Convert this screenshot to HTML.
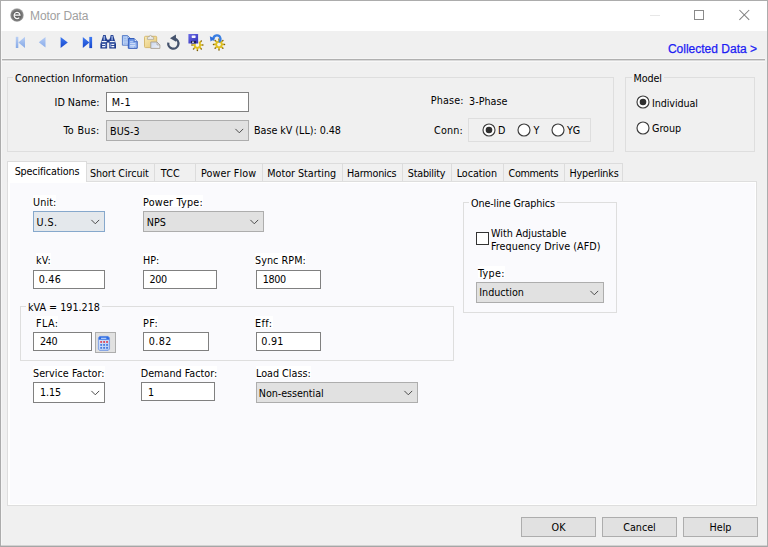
<!DOCTYPE html>
<html lang="en"><head><meta charset="utf-8"><title>Motor Data</title>
<style>
html,body{margin:0;padding:0}
body{width:768px;height:547px;overflow:hidden;background:#f0f0f0;position:relative;font-family:"DejaVu Sans Condensed", "Liberation Sans", sans-serif;font-size:10.7px;line-height:13px;color:#000}
div{box-sizing:border-box;position:absolute}
.t{white-space:nowrap;line-height:13px;height:13px}
.win{left:0;top:0;width:768px;height:547px;border:1px solid #acacac;border-bottom:1px solid #a6a6a6}
.winb{left:1px;top:545px;width:766px;height:1px;background:#d2d2d2}
.winl{left:1px;top:31px;width:1px;height:514px;background:#f6f6f6}
.title{left:1px;top:1px;width:766px;height:30px;background:#fff}
.ttl{font-family:"Liberation Sans",sans-serif;font-size:12px;color:#a0a0a0}
.cd{font-family:"Liberation Sans",sans-serif;font-size:12px;color:#1c1cf4;-webkit-text-stroke:0.25px #1c1cf4}
.sep{left:1px;top:58px;width:764px;height:4px;background:linear-gradient(#f5f5f5 0 25%,#b0b0b0 25% 50%,#d9d9d9 50% 75%,#f7f7f7 75% 100%)}
.sep2{display:none}
.grp{border:1px solid #dedede}
.gl{background:#f0f0f0;padding:0 2px}
.glw{background:#fafafd;padding:0 2px}
.lw{background:#fff;padding-top:1px;margin-top:-1px;height:12px;overflow:visible}
.inp{border:1px solid #808080;background:#fff}
.sel{border:1px solid #adadad;background:#e1e1e1}
.selh{border:1px solid #86a8cc;background:#e4e8ec}
.chev{position:absolute;right:4.2px;top:7px}
.btn{border:1px solid #adadad;background:#e1e1e1;text-align:center}
.tab{border:1px solid #dcdcdc;border-bottom:none;background:#f0f0f0;text-align:left}
.tabsel{border:1px solid #dcdcdc;border-bottom:none;background:#fff}
.panel{border:1px solid #dedede;background:#fff}
.page{background:#fafafd}
.radio{width:13px;height:13px;border:1px solid #333;border-radius:50%;background:#fff}
.radio.on::after{content:"";position:absolute;left:2px;top:2px;width:7px;height:7px;border-radius:50%;background:#333}
.chk{width:13px;height:13px;border:1px solid #333;background:#fff}
svg{position:absolute;overflow:visible}
</style></head>
<body>
<div class="title"></div>
<svg style="left:9.85px;top:7.6px" width="14" height="14" viewBox="0 0 14 14"><defs><radialGradient id="g" cx="0.5" cy="0.52" r="0.5"><stop offset="0" stop-color="#5e5e5e"/><stop offset="0.6" stop-color="#666"/><stop offset="0.86" stop-color="#858585"/><stop offset="1" stop-color="#adadad"/></radialGradient></defs><circle cx="7" cy="7" r="6.75" fill="url(#g)"/><path d="M4.1 7.15 H10 A2.95 3.1 0 1 0 9.25 9.55" fill="none" stroke="#fafafa" stroke-width="1.2"/></svg>
<div class="t ttl" style="left:30px;top:10.30px;letter-spacing:-0.1px;">Motor Data</div>
<svg style="left:649.5px;top:14.6px" width="11" height="2"><path d="M0 0.5 H10" stroke="#e7e7e7" stroke-width="1"/></svg>
<svg style="left:694px;top:10px" width="11" height="11"><rect x="0.5" y="0.5" width="9" height="9" fill="none" stroke="#8a8a8a" stroke-width="1"/></svg>
<svg style="left:739px;top:10px" width="11" height="11"><path d="M0.4 0 L10.2 9.8 M10.2 0 L0.4 9.8" stroke="#808080" stroke-width="1.05"/></svg>
<svg style="left:0;top:31px" width="240" height="28" viewBox="0 31 240 28">
<defs>
<linearGradient id="lb" x1="0" y1="0" x2="0" y2="1"><stop offset="0" stop-color="#b9cff4"/><stop offset="1" stop-color="#86a9e6"/></linearGradient>
<linearGradient id="lb2" x1="0" y1="0" x2="0" y2="1"><stop offset="0" stop-color="#b4cbf4"/><stop offset="1" stop-color="#8aacea"/></linearGradient>
<linearGradient id="vb" x1="0" y1="0" x2="0" y2="1"><stop offset="0" stop-color="#3f7bf2"/><stop offset="1" stop-color="#1746cc"/></linearGradient>
<linearGradient id="tan" x1="0" y1="0" x2="1" y2="1"><stop offset="0" stop-color="#f8ebb8"/><stop offset="1" stop-color="#e6c670"/></linearGradient>
<linearGradient id="fl" x1="0" y1="0" x2="1" y2="1"><stop offset="0" stop-color="#6a6ae6"/><stop offset="1" stop-color="#2f2fb4"/></linearGradient>
<linearGradient id="pg1" x1="0" y1="0" x2="1" y2="1"><stop offset="0" stop-color="#a3c2f1"/><stop offset="1" stop-color="#e3edfc"/></linearGradient><linearGradient id="pg2" x1="0" y1="0" x2="1" y2="1"><stop offset="0" stop-color="#5585e0"/><stop offset="1" stop-color="#b9d0f7"/></linearGradient>
<linearGradient id="pgp" x1="0" y1="0" x2="1" y2="1"><stop offset="0" stop-color="#c9d6ee"/><stop offset="1" stop-color="#f1f4fa"/></linearGradient>
<g id="gear">
<g stroke="#d4b218" stroke-width="1.6">
<path d="M0 -5.3V-2.6M0 5.3V2.6M-5.3 0H-2.6M5.3 0H2.6M-3.75 -3.75L-1.9 -1.9M3.75 3.75L1.9 1.9M-3.75 3.75L-1.9 1.9M3.75 -3.75L1.9 -1.9"/>
</g>
<circle cx="0" cy="0" r="2.7" fill="none" stroke="#dfc022" stroke-width="1.9"/>
<g fill="#7c5d08">
<circle cx="0" cy="-5.5" r="0.75"/><circle cx="0" cy="5.5" r="0.75"/><circle cx="-5.5" cy="0" r="0.75"/><circle cx="5.5" cy="0" r="0.75"/>
<circle cx="-3.9" cy="-3.9" r="0.75"/><circle cx="3.9" cy="3.9" r="0.75"/><circle cx="-3.9" cy="3.9" r="0.75"/><circle cx="3.9" cy="-3.9" r="0.75"/>
</g>
<circle cx="0" cy="0" r="1.45" fill="#f6f3e4"/>
</g>
</defs>
<!-- first -->
<rect x="15.8" y="36.8" width="2.5" height="11.2" fill="url(#lb)"/>
<path d="M25 36.8 L18.4 42.4 L25 48 Z" fill="url(#lb)"/>
<!-- prev -->
<path d="M45.5 37 L38.8 42.3 L45.5 47.6 Z" fill="url(#lb2)"/>
<!-- next -->
<path d="M60.6 36.9 L67.8 42.5 L60.6 48.1 Z" fill="url(#vb)"/>
<!-- last -->
<path d="M82.8 36.9 L89.4 42.5 L82.8 48.1 Z" fill="url(#vb)"/>
<rect x="89.3" y="36.9" width="2.8" height="11.2" fill="url(#vb)"/>
<!-- binoculars -->
<g fill="#1e3b8e">
<path d="M103.2 34.9 H105.7 L106.2 37.6 L107.1 39.6 V48.4 H100.4 V44 L102.5 37.6 Z"/>
<path d="M113.2 34.9 H110.7 L110.2 37.6 L109.3 39.6 V48.4 H116 V44 L113.9 37.6 Z"/>
<rect x="106.6" y="39.6" width="3.2" height="3"/>
</g>
<g fill="#f2f5fc">
<rect x="101.7" y="41" width="4.9" height="1.1"/>
<rect x="109.8" y="41" width="4.9" height="1.1"/>
<rect x="102.1" y="43.9" width="3" height="1.2"/>
<rect x="102.1" y="46" width="3" height="1.3"/>
<rect x="111.3" y="43.9" width="3" height="1.2"/>
<rect x="111.3" y="46" width="3" height="1.3"/>
</g>
<g fill="#8ea6dc">
<rect x="103.5" y="35.8" width="1.6" height="4.6"/>
<rect x="111.3" y="35.8" width="1.6" height="4.6"/>
<rect x="101.3" y="42.6" width="5" height="0.9" opacity="0.6"/>
<rect x="110.1" y="42.6" width="5" height="0.9" opacity="0.6"/>
<rect x="105.3" y="43.9" width="0.9" height="3.4"/>
<rect x="110.2" y="43.9" width="0.9" height="3.4"/>
</g>
<!-- copy -->
<path d="M122.4 35.6 H127.6 L130.2 38.2 V45.2 H122.4 Z" fill="url(#pg1)" stroke="#4d74c4" stroke-width="0.9"/>
<path d="M127.6 35.6 V38.2 H130.2" fill="none" stroke="#7d9bd6" stroke-width="0.7"/>
<path d="M123.9 38.4 H126.4 M123.9 40.2 H127.4 M123.9 42 H127 M123.9 43.7 H127.4" stroke="#8fb0e8" stroke-width="0.8"/>
<path d="M128.3 38.6 H134.2 L137.2 41.6 V48.3 H128.3 Z" fill="url(#pg2)" stroke="#2c56b8" stroke-width="1"/>
<path d="M134.2 38.6 V41.6 H137.2" fill="#dbe7fb" stroke="#2c56b8" stroke-width="0.7"/>
<path d="M130 41.8 H132.8 M130 43.6 H135.2 M130 45.4 H135.2 M130 47 H134" stroke="#e6eefc" stroke-width="0.8"/>
<!-- paste -->
<rect x="144.5" y="36.3" width="12.2" height="11.3" rx="1" fill="url(#tan)" stroke="#d3b467" stroke-width="0.9"/>
<path d="M147.4 39.4 V37.6 Q147.4 36.9 148.4 36.9 H149.2 Q149.4 35.4 150.5 35.4 Q151.6 35.4 151.8 36.9 H152.6 Q153.6 36.9 153.6 37.6 V39.4 Z" fill="#ececec" stroke="#a8a496" stroke-width="0.7"/>
<path d="M150.8 42 H157 L159.9 44.9 V48.4 H150.8 Z" fill="url(#pgp)" stroke="#a79f93" stroke-width="0.9"/>
<path d="M157 42 V44.9 H159.9" fill="none" stroke="#a79f93" stroke-width="0.7"/>
<!-- undo -->
<path d="M168.3 42.6 A5.1 5.1 0 1 0 174.6 38.6" fill="none" stroke="#45536d" stroke-width="2.3"/>
<path d="M175.9 34.5 L170 38.2 L176.1 41.8 Z" fill="#45536d"/>
<!-- save + gear -->
<use href="#gear" x="197.4" y="45"/>
<rect x="187.9" y="33.6" width="10.8" height="10.4" fill="#f0f0f0"/>
<rect x="188.4" y="34.1" width="9.7" height="9.3" rx="0.5" fill="url(#fl)"/>
<rect x="191.7" y="35.4" width="3.9" height="2.5" rx="0.6" fill="#f4f4fd"/>
<rect x="191" y="40.9" width="5" height="2.5" fill="#1c1c50"/>
<rect x="192.2" y="41.5" width="1.6" height="1.5" fill="#e4e4f2"/>
<!-- undo + gear -->
<use href="#gear" x="219" y="44.4"/>
<path d="M213.2 39.6 C213.4 34.4 219.6 33.8 220.5 38.6 C220.7 39.8 220.2 40.8 219.6 41.4" fill="none" stroke="#3a7fe2" stroke-width="2.3" stroke-linecap="round"/>
<path d="M209.8 36.2 L214.6 38.6 L210.6 41.6 Z" fill="#2f6fdc"/>
</svg>

<div class="t cd" style="right:11px;top:42.80px;">Collected Data &gt;</div>
<div class="sep"></div><div class="sep2"></div>
<div class="grp" style="left:7px;top:77px;width:607px;height:75px"></div>
<div class="t gl" style="left:13px;top:71.80px;letter-spacing:-0.010px;">Connection Information</div>
<div class="t " style="right:668.5px;top:95.55px;letter-spacing:0.006px;">ID Name:</div>
<div class="inp" style="left:106px;top:92px;width:143px;height:20px"></div>
<div class="t " style="left:111.75px;top:95.55px;letter-spacing:0.448px;">M-1</div>
<div class="t " style="right:668.5px;top:124.30px;letter-spacing:0.290px;">To Bus:</div>
<div class="sel" style="left:106px;top:120px;width:143px;height:21px"><svg class="chev" width="8.6" height="6" viewBox="0 0 8.6 6"><path d="M0.4 0.9 L4.3 4.8 L8.2 0.9" fill="none" stroke="#4a4a4a" stroke-width="1"/></svg></div>
<div class="t " style="left:110px;top:125.30px;letter-spacing:0.077px;">BUS-3</div>
<div class="t " style="left:254px;top:124.30px;letter-spacing:-0.037px;">Base kV (LL): 0.48</div>
<div class="t " style="left:430.75px;top:94.30px;letter-spacing:0.168px;">Phase:</div>
<div class="t " style="left:469px;top:94.80px;letter-spacing:0.022px;">3-Phase</div>
<div class="t " style="left:434px;top:124.30px;letter-spacing:0.188px;">Conn:</div>
<div class="grp" style="left:468px;top:118px;width:123px;height:24px"></div>
<svg style="left:482.00px;top:122.50px" width="14" height="14" viewBox="0 0 14 14"><circle cx="7" cy="7" r="6" fill="#fff" stroke="#3c3c3c" stroke-width="1.15"/><circle cx="7" cy="7" r="3.3" fill="#2f2f2f"/></svg>
<div class="t " style="left:498px;top:124.30px;">D</div>
<svg style="left:517.40px;top:122.50px" width="14" height="14" viewBox="0 0 14 14"><circle cx="7" cy="7" r="6" fill="#fff" stroke="#3c3c3c" stroke-width="1.15"/></svg>
<div class="t " style="left:533.5px;top:124.30px;">Y</div>
<svg style="left:551.00px;top:122.50px" width="14" height="14" viewBox="0 0 14 14"><circle cx="7" cy="7" r="6" fill="#fff" stroke="#3c3c3c" stroke-width="1.15"/></svg>
<div class="t " style="left:567px;top:124.30px;">YG</div>
<div class="grp" style="left:625px;top:77px;width:130px;height:75px"></div>
<div class="t gl" style="left:631.5px;top:71.80px;letter-spacing:-0.082px;">Model</div>
<svg style="left:636.10px;top:95.20px" width="14" height="14" viewBox="0 0 14 14"><circle cx="7" cy="7" r="6" fill="#fff" stroke="#3c3c3c" stroke-width="1.15"/><circle cx="7" cy="7" r="3.3" fill="#2f2f2f"/></svg>
<div class="t " style="left:652px;top:96.55px;letter-spacing:-0.089px;">Individual</div>
<svg style="left:636.10px;top:120.70px" width="14" height="14" viewBox="0 0 14 14"><circle cx="7" cy="7" r="6" fill="#fff" stroke="#3c3c3c" stroke-width="1.15"/></svg>
<div class="t " style="left:652px;top:121.80px;letter-spacing:-0.057px;">Group</div>
<div class="tab" style="left:84.5px;top:163px;width:70.0px;height:19px"><div class="t" style="left:4.50px;top:2.80px;letter-spacing:-0.084px;">Short Circuit</div></div>
<div class="tab" style="left:153.5px;top:163px;width:42.0px;height:19px"><div class="t" style="left:6.25px;top:2.80px;letter-spacing:0.184px;">TCC</div></div>
<div class="tab" style="left:194.5px;top:163px;width:68.0px;height:19px"><div class="t" style="left:5.50px;top:2.80px;letter-spacing:0.116px;">Power Flow</div></div>
<div class="tab" style="left:261.5px;top:163px;width:81.0px;height:19px"><div class="t" style="left:4.75px;top:2.80px;letter-spacing:-0.019px;">Motor Starting</div></div>
<div class="tab" style="left:341.5px;top:163px;width:61.0px;height:19px"><div class="t" style="left:4.60px;top:2.80px;letter-spacing:-0.218px;">Harmonics</div></div>
<div class="tab" style="left:401.5px;top:163px;width:50.5px;height:19px"><div class="t" style="left:5.25px;top:2.80px;letter-spacing:-0.210px;">Stability</div></div>
<div class="tab" style="left:451px;top:163px;width:53px;height:19px"><div class="t" style="left:4.75px;top:2.80px;letter-spacing:-0.055px;">Location</div></div>
<div class="tab" style="left:503px;top:163px;width:61.5px;height:19px"><div class="t" style="left:4.50px;top:2.80px;letter-spacing:-0.304px;">Comments</div></div>
<div class="tab" style="left:563.5px;top:163px;width:59.0px;height:19px"><div class="t" style="left:5.00px;top:2.80px;letter-spacing:-0.197px;">Hyperlinks</div></div>
<div class="panel" style="left:7px;top:181px;width:750px;height:325px"></div>
<div class="page" style="left:10px;top:183px;width:745px;height:321px"></div>
<div class="tabsel" style="left:7px;top:161px;width:80px;height:21px"><div class="t" style="left:0;right:0;text-align:center;top:2.80px;letter-spacing:-0.148px;">Specifications</div></div>
<div class="t lw" style="left:33px;top:195.80px;letter-spacing:0.132px;">Unit:</div>
<div class="selh" style="left:33px;top:211px;width:72px;height:21px"><svg class="chev" width="8.6" height="6" viewBox="0 0 8.6 6"><path d="M0.4 0.9 L4.3 4.8 L8.2 0.9" fill="none" stroke="#4a4a4a" stroke-width="1"/></svg></div>
<div class="t " style="left:36.5px;top:215.80px;letter-spacing:0.432px;">U.S.</div>
<div class="t lw" style="left:143px;top:195.80px;letter-spacing:0.245px;">Power Type:</div>
<div class="sel" style="left:143px;top:211px;width:121px;height:21px"><svg class="chev" width="8.6" height="6" viewBox="0 0 8.6 6"><path d="M0.4 0.9 L4.3 4.8 L8.2 0.9" fill="none" stroke="#4a4a4a" stroke-width="1"/></svg></div>
<div class="t " style="left:146.75px;top:215.80px;letter-spacing:0.044px;">NPS</div>
<div class="t lw" style="left:36px;top:254.30px;letter-spacing:0.157px;">kV:</div>
<div class="inp" style="left:33px;top:270px;width:72px;height:19px"></div>
<div class="t " style="left:38.75px;top:272.80px;letter-spacing:0.206px;">0.46</div>
<div class="t lw" style="left:143px;top:254.30px;letter-spacing:-0.013px;">HP:</div>
<div class="inp" style="left:143px;top:270px;width:74px;height:19px"></div>
<div class="t " style="left:149.5px;top:272.80px;letter-spacing:-0.350px;">200</div>
<div class="t lw" style="left:255px;top:254.30px;letter-spacing:0.077px;">Sync RPM:</div>
<div class="inp" style="left:255.5px;top:270px;width:65.5px;height:19px"></div>
<div class="t " style="left:262.75px;top:272.80px;letter-spacing:-0.350px;">1800</div>
<div class="grp" style="left:20px;top:306px;width:434px;height:55px"></div>
<div class="t glw" style="left:26px;top:300.80px;letter-spacing:-0.003px;">kVA = 191.218</div>
<div class="t lw" style="left:36px;top:316.80px;letter-spacing:0.429px;">FLA:</div>
<div class="inp" style="left:33px;top:332px;width:59px;height:19px"></div>
<div class="t " style="left:40px;top:335.30px;letter-spacing:-0.350px;">240</div>
<div class="sel" style="left:95px;top:332px;width:20.5px;height:21px"><svg style="left:2.4px;top:3px" width="12.3" height="14.8" viewBox="0 0 13 15" preserveAspectRatio="none"><defs><linearGradient id="cb" x1="0" y1="0" x2="1" y2="1"><stop offset="0" stop-color="#dbe6fb"/><stop offset="1" stop-color="#b4cbf5"/></linearGradient></defs><path d="M1.6 0.4 H10.8 L12.2 1.8 V13.2 L10.8 14.6 H1.6 L0.4 13.2 V1.8 Z" fill="url(#cb)" stroke="#5784e2" stroke-width="0.7"/><path d="M1.8 0.6 H10.6 L11.8 1.8 V3.8 H0.8 V1.8 Z" fill="#2e6ce2"/><rect x="3.2" y="1.8" width="5.6" height="1" fill="#d7e6ff"/><g fill="#e0394a"><rect x="2.4" y="5.2" width="1.9" height="1.7"/><rect x="5.5" y="5.2" width="1.9" height="1.7"/><rect x="8.6" y="5.2" width="1.9" height="1.7"/></g><g fill="#3f74dc"><rect x="2.4" y="8.2" width="1.9" height="1.7"/><rect x="5.5" y="8.2" width="1.9" height="1.7"/><rect x="8.6" y="8.2" width="1.9" height="1.7"/><rect x="2.4" y="11.2" width="1.9" height="1.7"/><rect x="5.5" y="11.2" width="1.9" height="1.7"/><rect x="8.6" y="11.2" width="1.9" height="1.7"/></g></svg>
</div>
<div class="t lw" style="left:143px;top:316.80px;letter-spacing:0.550px;">PF:</div>
<div class="inp" style="left:143px;top:332px;width:65.5px;height:19px"></div>
<div class="t " style="left:148.75px;top:335.30px;letter-spacing:0.393px;">0.82</div>
<div class="t lw" style="left:255px;top:316.80px;letter-spacing:0.449px;">Eff:</div>
<div class="inp" style="left:255.5px;top:332px;width:65.5px;height:19px"></div>
<div class="t " style="left:261.25px;top:335.30px;letter-spacing:0.268px;">0.91</div>
<div class="t lw" style="left:33px;top:366.55px;letter-spacing:0.037px;">Service Factor:</div>
<div class="inp" style="left:33px;top:382px;width:72px;height:20.600000000000023px"><svg class="chev" width="8.6" height="6" viewBox="0 0 8.6 6"><path d="M0.4 0.9 L4.3 4.8 L8.2 0.9" fill="none" stroke="#4a4a4a" stroke-width="1"/></svg></div>
<div class="t " style="left:40px;top:385.55px;letter-spacing:-0.107px;">1.15</div>
<div class="t lw" style="left:140.75px;top:366.55px;letter-spacing:0.014px;">Demand Factor:</div>
<div class="inp" style="left:141px;top:382px;width:74px;height:19px"></div>
<div class="t " style="left:148px;top:385.55px;">1</div>
<div class="t lw" style="left:256px;top:366.55px;letter-spacing:0.005px;">Load Class:</div>
<div class="sel" style="left:255.5px;top:382px;width:162.5px;height:20.600000000000023px"><svg class="chev" width="8.6" height="6" viewBox="0 0 8.6 6"><path d="M0.4 0.9 L4.3 4.8 L8.2 0.9" fill="none" stroke="#4a4a4a" stroke-width="1"/></svg></div>
<div class="t " style="left:258.75px;top:386.55px;letter-spacing:-0.052px;">Non-essential</div>
<div class="grp" style="left:463px;top:202px;width:153.5px;height:110.5px"></div>
<div class="t glw" style="left:469px;top:196.55px;letter-spacing:-0.119px;">One-line Graphics</div>
<div class="chk" style="left:476px;top:232px"></div>
<div class="t " style="left:491px;top:226.80px;letter-spacing:-0.005px;">With Adjustable</div>
<div class="t " style="left:491px;top:239.80px;letter-spacing:0.061px;">Frequency Drive (AFD)</div>
<div class="t lw" style="left:478px;top:267.30px;letter-spacing:0.362px;">Type:</div>
<div class="sel" style="left:476px;top:282px;width:127.5px;height:21px"><svg class="chev" width="8.6" height="6" viewBox="0 0 8.6 6"><path d="M0.4 0.9 L4.3 4.8 L8.2 0.9" fill="none" stroke="#4a4a4a" stroke-width="1"/></svg></div>
<div class="t " style="left:479.25px;top:286.05px;letter-spacing:-0.015px;">Induction</div>
<div class="btn" style="left:521px;top:517px;width:75px;height:20px"><div class="t" style="left:0;right:0;top:2.50px">OK</div></div>
<div class="btn" style="left:602px;top:517px;width:75px;height:20px"><div class="t" style="left:0;right:0;top:2.50px">Cancel</div></div>
<div class="btn" style="left:683px;top:517px;width:75px;height:20px"><div class="t" style="left:0;right:0;top:2.50px">Help</div></div>
<div class="winl"></div><div class="winb"></div><div class="win"></div>
</body></html>
